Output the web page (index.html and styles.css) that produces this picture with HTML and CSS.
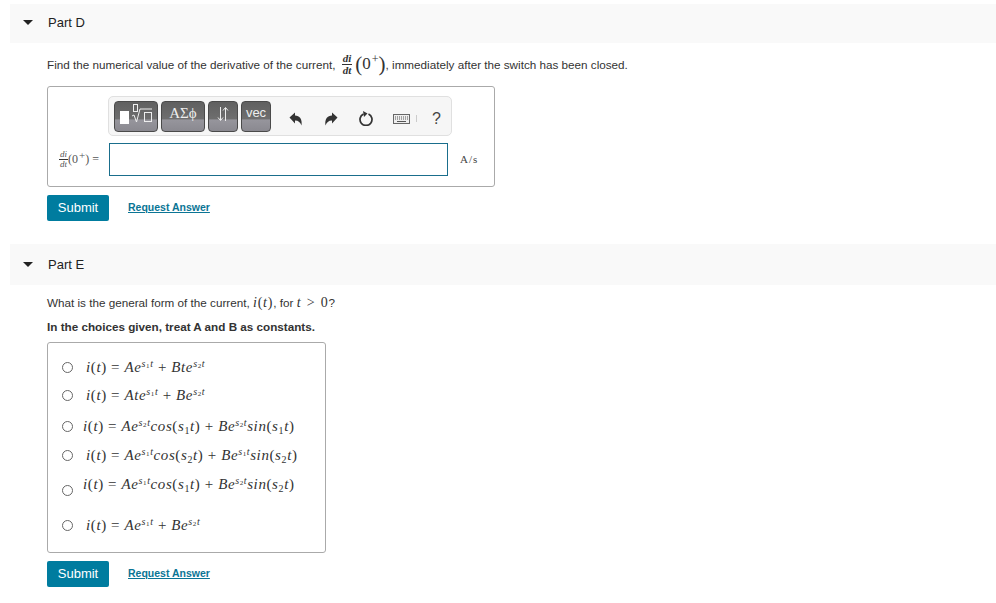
FILE: index.html
```html
<!DOCTYPE html>
<html lang="en">
<head>
  <meta charset="UTF-8">
  <title>Part D and Part E</title>
  <link rel="stylesheet" href="styles.css">
</head>
<body>

  <section class="part part-d">
    <div class="part-head">
      <span class="caret"></span>
      <span class="part-title">Part D</span>
    </div>
    <div class="part-body">
      <p class="question">Find the numerical value of the derivative of the current, <span class="math big-math"><span class="frac"><span class="num">di</span><span class="den">dt</span></span><span class="paren">(</span><span>0<sup>+</sup></span><span class="paren">)</span></span>, immediately after the switch has been closed.</p>

      <div class="answer-box">
        <div class="toolbar">
          <button class="tool tool-root">
            <span class="white-block"></span>
            <svg width="32" height="24" viewBox="0 0 32 24">
              <rect x="4.500" y="1.500" width="4" height="7" fill="none" stroke="#eee"/>
              <path d="M3 13l2 -1l2.500 7l3.500 -13h12" fill="none" stroke="#eee"/>
              <rect x="15.500" y="9.500" width="7" height="9" fill="none" stroke="#eee"/>
            </svg>
          </button>
          <button class="tool tool-greek">ΑΣϕ</button>
          <button class="tool tool-arrows">
            <svg width="12" height="16" viewBox="0 0 12 16">
              <path d="M3.500 1v13M1 11.500l2.500 3l2.500 -3" fill="none" stroke="#eee"/>
              <path d="M8.500 15v-13M6 4.500l2.500 -3l2.500 3" fill="none" stroke="#eee"/>
            </svg>
          </button>
          <button class="tool tool-vec">vec</button>
          <div class="tool-icons">
            <svg class="icon" width="14" height="14" viewBox="0 0 14 14"><path d="M0.500 5.500l5.500 -5v3c4.500 0 7.500 3.500 6.500 10c-1 -3 -3 -5 -6.500 -5v3z" fill="#333"/></svg>
            <svg class="icon" width="14" height="14" viewBox="0 0 14 14"><path d="M13.500 5.500l-5.500 -5v3c-4.500 0 -7.500 3.500 -6.500 10c1 -3 3 -5 6.500 -5v3z" fill="#333"/></svg>
            <svg class="icon reload" width="14" height="15" viewBox="0 0 14 15"><path d="M9.500 3a6 6 0 1 1 -5 0" fill="none" stroke="#333" stroke-width="1.700"/><path d="M4 0l4.500 2.500l-3.500 3.500z" fill="#333"/></svg>
            <svg class="keyboard" width="17" height="10" viewBox="0 0 17 10">
              <rect x="0.500" y="0.500" width="16" height="9" fill="#eee" stroke="#666"/>
              <path d="M2 3h13M2 5h13" stroke="#555" stroke-dasharray="1 1"/>
              <path d="M4 7.500h9" stroke="#555"/>
            </svg>
            <span class="tool-sep"></span>
            <span class="help">?</span>
          </div>
        </div>
        <div class="input-row">
          <span class="input-label math"><span class="frac small-frac"><span class="num">di</span><span class="den">dt</span></span><span>(0<sup>+</sup>) =</span></span>
          <div class="input-field"></div>
          <span class="units">A/s</span>
        </div>
      </div>

      <div class="actions">
        <button class="submit">Submit</button>
        <a class="request" href="#">Request Answer</a>
      </div>
    </div>
  </section>

  <section class="part part-e">
    <div class="part-head">
      <span class="caret"></span>
      <span class="part-title">Part E</span>
    </div>
    <div class="part-body">
      <p class="question q-e">What is the general form of the current, <span class="math mid-math"><i>i</i>(<i>t</i>)</span>, for <span class="math mid-math"><i>t</i> &gt; 0</span>?</p>
      <p class="note">In the choices given, treat A and B as constants.</p>

      <div class="choices">
        <label class="choice row-1"><span class="radio"></span><span class="math eq"><i>i</i>(<i>t</i>) = <i>Ae</i><sup><i>s</i><sub>1</sub><i>t</i></sup> + <i>Bte</i><sup><i>s</i><sub>2</sub><i>t</i></sup></span></label>
        <label class="choice row-2"><span class="radio"></span><span class="math eq"><i>i</i>(<i>t</i>) = <i>Ate</i><sup><i>s</i><sub>1</sub><i>t</i></sup> + <i>Be</i><sup><i>s</i><sub>2</sub><i>t</i></sup></span></label>
        <label class="choice row-3"><span class="radio"></span><span class="math eq tight"><i>i</i>(<i>t</i>) = <i>Ae</i><sup><i>s</i><sub>2</sub><i>t</i></sup><i>cos</i>(<i>s</i><sub>1</sub><i>t</i>) + <i>Be</i><sup><i>s</i><sub>2</sub><i>t</i></sup><i>sin</i>(<i>s</i><sub>1</sub><i>t</i>)</span></label>
        <label class="choice row-4"><span class="radio"></span><span class="math eq"><i>i</i>(<i>t</i>) = <i>Ae</i><sup><i>s</i><sub>1</sub><i>t</i></sup><i>cos</i>(<i>s</i><sub>2</sub><i>t</i>) + <i>Be</i><sup><i>s</i><sub>1</sub><i>t</i></sup><i>sin</i>(<i>s</i><sub>2</sub><i>t</i>)</span></label>
        <label class="choice row-5"><span class="radio"></span><span class="math eq tight"><i>i</i>(<i>t</i>) = <i>Ae</i><sup><i>s</i><sub>1</sub><i>t</i></sup><i>cos</i>(<i>s</i><sub>1</sub><i>t</i>) + <i>Be</i><sup><i>s</i><sub>2</sub><i>t</i></sup><i>sin</i>(<i>s</i><sub>2</sub><i>t</i>)</span></label>
        <label class="choice row-6"><span class="radio"></span><span class="math eq"><i>i</i>(<i>t</i>) = <i>Ae</i><sup><i>s</i><sub>1</sub><i>t</i></sup> + <i>Be</i><sup><i>s</i><sub>2</sub><i>t</i></sup></span></label>
      </div>

      <div class="actions">
        <button class="submit">Submit</button>
        <a class="request" href="#">Request Answer</a>
      </div>
    </div>
  </section>

</body>
</html>
```

FILE: styles.css
```css
body, html {
  margin: 0;
  padding: 0;
  background: #fff;
}

body {
  font-family: "Liberation Sans", Arial, sans-serif;
  font-size: 11.7px;
  color: #333;
  padding: 4px 0 0 10px;
}

.part-head {
  display: flex;
  align-items: center;
  box-sizing: border-box;
  height: 39px;
  background: #f9f9f9;
}

.part-d .part-head {
  padding-bottom: 2px;
}

.part-e {
  margin-top: 23px;
}

.part-e .part-head {
  height: 41px;
}

.caret {
  width: 0;
  height: 0;
  margin-left: 13px;
  border-left: 5px solid transparent;
  border-right: 5px solid transparent;
  border-top: 5px solid #222;
}

.part-title {
  margin-left: 15px;
  color: #222;
  font-size: 13px;
}

.part-body {
  padding-left: 37px;
}

.question {
  height: 30px;
  margin: 6px 0 0;
  line-height: 32px;
  white-space: nowrap;
}

.math {
  font-family: "Liberation Serif", "Times New Roman", serif;
}

.math sup, .math sub {
  line-height: 0;
}

.big-math {
  display: inline-flex;
  align-items: center;
  height: 30px;
  margin-left: 3px;
  font-size: 17px;
  vertical-align: top;
}

.frac {
  display: inline-flex;
  flex-direction: column;
  align-items: center;
  margin-right: 3px;
  font-size: 11px;
  font-style: italic;
  font-weight: bold;
  line-height: 11px;
}

.num {
  border-bottom: 1px solid #333;
  padding: 0 1px;
}

.paren {
  font-size: 21px;
  font-weight: normal;
}

.big-math sup {
  margin-left: 1px;
  font-size: 12px;
  vertical-align: 6px;
}

.answer-box {
  box-sizing: border-box;
  width: 448px;
  height: 101px;
  margin-top: 7px;
  padding: 9px 0 0 6px;
  border: 1px solid #aaa;
  border-radius: 3px;
}

.toolbar {
  display: flex;
  align-items: center;
  gap: 3px;
  box-sizing: border-box;
  width: 344px;
  height: 40px;
  margin-left: 54px;
  padding: 0 5px;
  background: #f6f6f6;
  border: 1px solid #e0e0e0;
  border-radius: 5px;
}

.tool {
  display: flex;
  justify-content: center;
  height: 31px;
  padding: 0;
  border: 1px solid #4a4a4a;
  border-radius: 4px;
  background: linear-gradient(#606060 0, #6e6e6e 58%, #96959c 62%, #8a8990 100%);
  color: #eee;
  font-family: "Liberation Serif", serif;
}

.tool-root {
  position: relative;
  width: 44px;
}

.white-block {
  position: absolute;
  left: 5px;
  bottom: 7px;
  width: 9px;
  height: 13px;
  background: #fff;
}

.tool-root svg {
  position: absolute;
  left: 14px;
  top: 1px;
}

.tool-greek {
  width: 44px;
  padding-top: 3px;
  font-size: 15px;
}

.tool-arrows {
  width: 30px;
  padding-top: 4px;
}

.tool-vec {
  width: 30px;
  padding-top: 3px;
  font-size: 13px;
  font-family: "Liberation Sans", sans-serif;
}

.tool-icons {
  display: flex;
  align-items: center;
  margin: 5px 0 0 15px;
}

.icon {
  margin-right: 21px;
}

.reload {
  margin-right: 20px;
}

.tool-sep {
  width: 1px;
  height: 7px;
  margin: 0 15px 0 6px;
  background: #ccc;
}

.help {
  font-size: 16px;
  font-family: "Liberation Sans", sans-serif;
  color: #444;
}

.input-row {
  display: flex;
  align-items: center;
  margin-top: 7px;
}

.input-label {
  display: flex;
  align-items: center;
  flex: none;
  width: 50px;
  margin-left: 5px;
  white-space: pre;
  font-size: 12px;
  color: #555;
}

.small-frac {
  margin-right: 0;
  font-size: 9px;
  font-weight: normal;
  line-height: 9px;
}

.input-label sup {
  margin-left: 1px;
  font-size: 11px;
  vertical-align: 4px;
}

.input-field {
  box-sizing: border-box;
  flex: none;
  width: 339px;
  height: 33px;
  border: 1px solid #1a6e8c;
  background: #fff;
}

.units {
  margin: 0 0 2px 12px;
  font-family: "Liberation Serif", serif;
  font-size: 11px;
  letter-spacing: 1px;
  color: #444;
}

.actions {
  display: flex;
  align-items: center;
  gap: 19px;
  margin-top: 8px;
}

.submit {
  width: 62px;
  height: 26px;
  padding: 0 0 2px;
  border: none;
  border-radius: 2px;
  background: #007c9f;
  color: #fff;
  font-family: "Liberation Sans", Arial, sans-serif;
  font-size: 13px;
}

.request {
  padding-bottom: 2px;
  color: #0b7595;
  font-size: 10.500px;
  font-weight: bold;
  text-decoration: underline;
}

.q-e {
  height: 28px;
  margin-top: 4px;
  line-height: 28px;
}

.mid-math {
  font-size: 14px;
  letter-spacing: .8px;
  word-spacing: 1px;
}

.note {
  margin: 0;
  padding-top: 3px;
  font-weight: bold;
  color: #333;
}

.choices {
  box-sizing: border-box;
  width: 279px;
  height: 211px;
  margin-top: 9px;
  padding-top: 10px;
  border: 1px solid #aaa;
  border-radius: 3px;
}

.choice {
  display: flex;
  align-items: center;
  padding-left: 14px;
}

.row-1 { height: 28px; }
.row-2 { height: 28px; }
.row-3 { height: 34px; }
.row-4 { height: 24px; }
.row-5 { height: 46px; }
.row-6 { height: 24px; }

.radio {
  flex: none;
  box-sizing: border-box;
  width: 11px;
  height: 11px;
  margin-right: 13px;
  border: 1.500px solid #666;
  border-radius: 50%;
  background: #fff;
}

.eq {
  font-size: 15px;
  letter-spacing: .6px;
  white-space: pre;
  color: #333;
}

.tight {
  margin-left: -3px;
}

.eq sup {
  font-size: 10px;
  vertical-align: 5px;
}

.eq sup sub {
  font-size: 7px;
  vertical-align: -1px;
}

.eq sub {
  font-size: 10px;
  vertical-align: -3px;
}

.row-5 .eq {
  padding-bottom: 12px;
}
```
